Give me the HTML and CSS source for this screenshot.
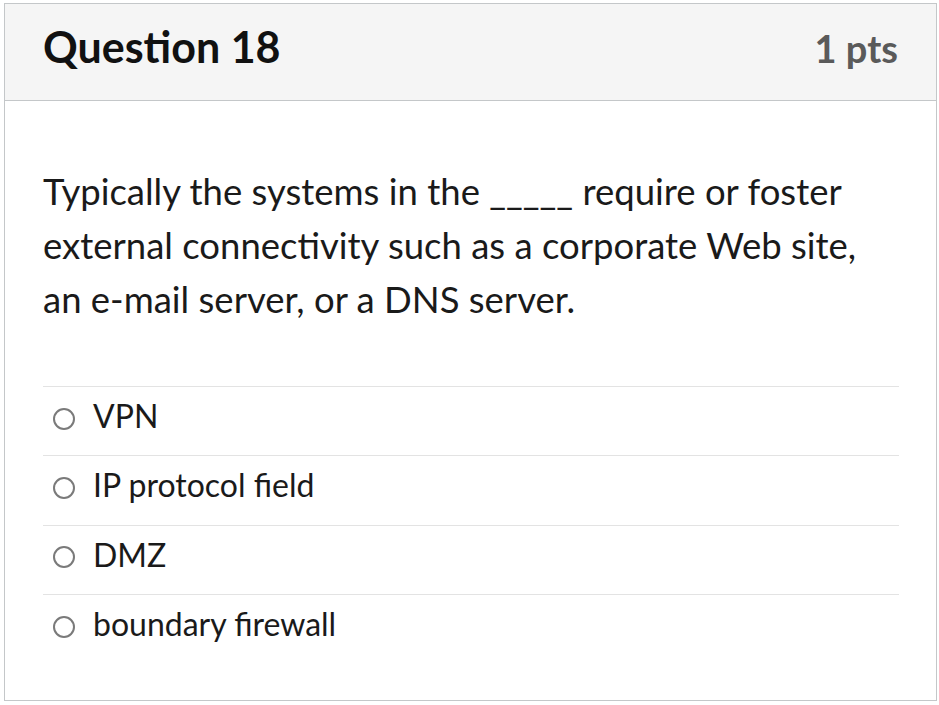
FILE: index.html
```html
<!DOCTYPE html>
<html lang="en">
<head>
<meta charset="utf-8">
<title>Question 18</title>
<link rel="stylesheet" href="styles.css">
</head>
<body>
<div class="question">
  <div class="q-header">
    <h2 class="q-title">Question 18</h2>
    <span class="q-pts">1 pts</span>
  </div>
  <div class="q-body">
    <p class="q-text">Typically the systems in the _____ require or foster external connectivity such as a corporate Web site, an e-mail server, or a DNS server.</p>
    <ul class="answers">
      <li class="answer"><span class="radio"></span><span class="label">VPN</span></li>
      <li class="answer"><span class="radio"></span><span class="label">IP protocol field</span></li>
      <li class="answer"><span class="radio"></span><span class="label">DMZ</span></li>
      <li class="answer"><span class="radio"></span><span class="label">boundary firewall</span></li>
    </ul>
  </div>
</div>
</body>
</html>
```
FILE: styles.css
```css
html, body {
  margin: 0;
  padding: 0;
  background: #ffffff;
}
body {
  font-family: Lato, "Liberation Sans", sans-serif;
  color: #1f2326;
  padding: 3px 2px 0 4px;
}
.question {
  width: 931px;
  height: 696px;
  border: 1px solid #c4c7c9;
  box-sizing: content-box;
}
.q-header {
  display: flex;
  justify-content: space-between;
  align-items: baseline;
  background: #f5f5f5;
  border-bottom: 1px solid #c4c7c9;
  padding: 19px 38px 0 38px;
  height: 77px;
}
.q-title {
  margin: 0;
  font-size: 43px;
  line-height: 48px;
  font-weight: 700;
  color: #111;
}
.q-pts {
  font-size: 38px;
  line-height: 48px;
  font-weight: 700;
  color: #5a5a5a;
}
.q-body {
  padding: 63px 37px 0 38px;
}
.q-text {
  margin: 0 0 60px 0;
  font-size: 36.5px;
  line-height: 54px;
  color: #1a1a1a;
}
.answers {
  list-style: none;
  margin: 0;
  padding: 0;
}
.answer {
  display: flex;
  align-items: center;
  border-top: 1px solid #e3e3e3;
  padding: 4px 0 15px 0;
  height: 49.3px;
}
.radio {
  width: 18px;
  height: 18px;
  border: 2px solid #7a7a7a;
  border-radius: 50%;
  margin: 6px 18px 0 10px;
  flex: none;
}
.label {
  font-size: 32px;
  line-height: 49px;
  color: #1a1a1a;
}
```
